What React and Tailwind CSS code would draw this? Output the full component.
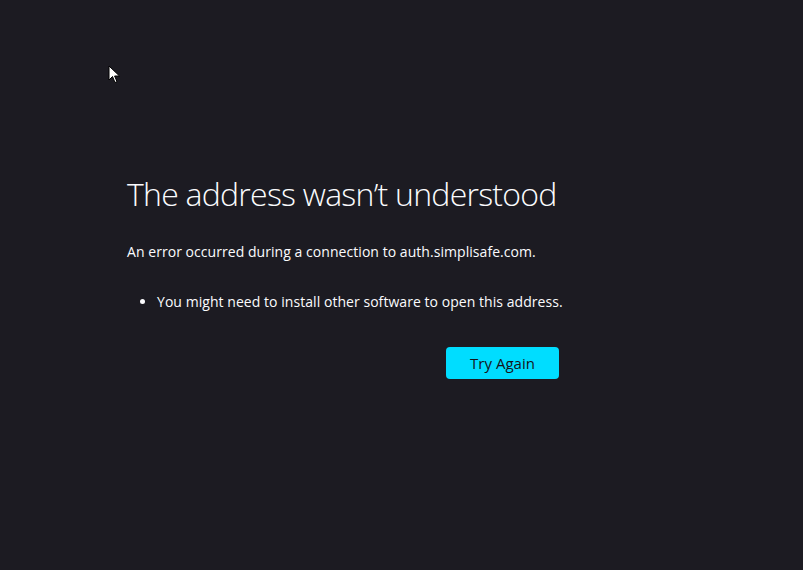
export default function App() {
  return (
    <div className="relative w-[803px] h-[570px] bg-[#1c1b22] text-[#fbfbfe] overflow-hidden" style={{ fontFamily: '"Open Sans", "Noto Sans", sans-serif' }}>
      {/* mouse cursor */}
      <svg className="absolute left-[108px] top-[65px]" width="13" height="20" viewBox="0 0 13 20">
        <path d="M1 1 L1 15 L4.5 11.5 L7 17.5 L9 16.7 L6.6 11 L11.5 11 Z" fill="#fff" stroke="#000" strokeWidth="1" />
      </svg>

      <div className="pt-[172px] pl-[127px]">
        <div className="w-[432px] flex flex-col">
          <h1 className="text-[32px] leading-[44px] font-light tracking-[-0.75px] whitespace-nowrap">
            The address wasn’t understood
          </h1>
          <p className="mt-[26px] text-[14px] leading-[20px] tracking-[0.05px] whitespace-nowrap">
            An error occurred during a connection to auth.simplisafe.com.
          </p>
          <ul className="mt-[30px] pl-[30px] list-disc text-[14px] leading-[20px] tracking-[0.05px]">
            <li className="whitespace-nowrap">You might need to install other software to open this address.</li>
          </ul>
          <div className="mt-[35px] flex justify-end">
            <button className="w-[113px] h-[32px] rounded bg-[#00ddff] text-[#15141a] text-[15px] font-medium">
              Try Again
            </button>
          </div>
        </div>
      </div>
    </div>
  );
}
